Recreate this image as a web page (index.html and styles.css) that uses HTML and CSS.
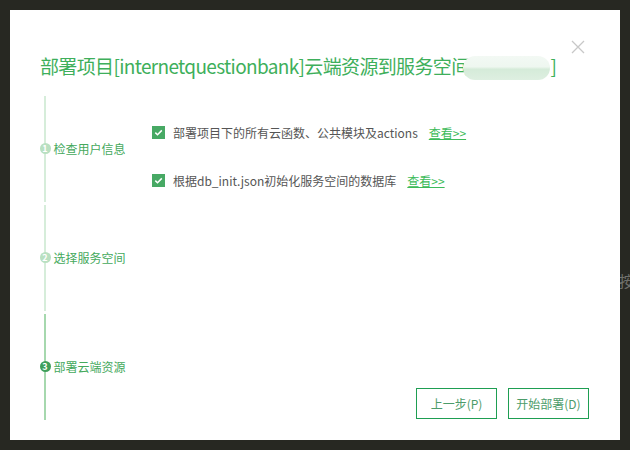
FILE: index.html
```html
<!DOCTYPE html>
<html lang="zh">
<head>
<meta charset="utf-8">
<link rel="stylesheet" href="styles.css">
</head>
<body>
<div class="behind">按</div>
<div class="dialog">
  <button class="close" aria-label="close">
    <svg width="14" height="14" viewBox="0 0 14 14"><path d="M1 1L13 13M13 1L1 13" stroke="#c8c8c8" stroke-width="1.3" fill="none"/></svg>
  </button>
  <h1 class="title">部署项目[internetquestionbank]云端资源到服务空间<span class="blur"></span>]</h1>
  <div class="body">
    <div class="steps">
      <div class="step"><span class="num">1</span><span class="label">检查用户信息</span></div>
      <div class="step"><span class="num">2</span><span class="label">选择服务空间</span></div>
      <div class="step active"><span class="num">3</span><span class="label">部署云端资源</span></div>
    </div>
    <div class="content">
      <div class="rows">
        <div class="row">
          <span class="check"><svg width="13" height="13" viewBox="0 0 13 13"><path d="M3.3 6.6L5.5 8.7L9.8 4.4" stroke="#fff" stroke-width="1.5" fill="none"/></svg></span>
          <span class="text">部署项目下的所有云函数、公共模块及actions</span>
          <a class="link" href="#">查看&gt;&gt;</a>
        </div>
        <div class="row">
          <span class="check"><svg width="13" height="13" viewBox="0 0 13 13"><path d="M3.3 6.6L5.5 8.7L9.8 4.4" stroke="#fff" stroke-width="1.5" fill="none"/></svg></span>
          <span class="text">根据db_init.json初始化服务空间的数据库</span>
          <a class="link" href="#">查看&gt;&gt;</a>
        </div>
      </div>
      <div class="footer">
        <button class="btn">上一步(P)</button>
        <button class="btn">开始部署(D)</button>
      </div>
    </div>
  </div>
</div>
</body>
</html>
```
FILE: styles.css
```css
html, body {
  margin: 0;
  padding: 0;
}
body {
  background: #272822;
  width: 630px;
  height: 450px;
  overflow: hidden;
  position: relative;
  font-family: "Noto Sans CJK SC", "Noto Sans", sans-serif;
}
.behind {
  position: absolute;
  left: 619px;
  top: 270px;
  font-size: 15px;
  color: #6f706b;
}
.dialog {
  position: relative;
  z-index: 1;
  margin: 10px;
  width: 610px;
  height: 430px;
  background: #fff;
  box-sizing: border-box;
  padding-right: 31px;
  display: flex;
  flex-direction: column;
}
.close {
  position: absolute;
  left: 561px;
  top: 30px;
  width: 14px;
  height: 14px;
  padding: 0;
  border: 0;
  background: none;
  display: block;
}
.close svg { display: block; }
.title {
  margin: 43px 0 0 30px;
  font-size: 19px;
  line-height: 26px;
  font-weight: normal;
  color: #3eaf5b;
  white-space: nowrap;
  letter-spacing: -0.65px;
}
.blur {
  display: inline-block;
  width: 87px;
  height: 24px;
  vertical-align: -6px;
  border-radius: 12px;
  background: linear-gradient(#f3f9f4 0%, #eef7f0 45%, #d5ebd9 55%, #deefe1 100%);
  margin-left: -7px;
  margin-right: 1px;
}
.body {
  margin-top: 16px;
  display: flex;
  flex: 1;
}
.steps {
  width: 108px;
  padding-left: 34px;
  display: flex;
  flex-direction: column;
  gap: 3px;
}
.step {
  height: 106px;
  box-sizing: border-box;
  padding-bottom: 2px;
  border-left: 2px solid #d6edda;
  display: flex;
  align-items: center;
}
.step.active {
  border-left-color: #a6d8ae;
}
.num {
  width: 11px;
  height: 11px;
  margin-left: -6.5px;
  border-radius: 50%;
  background: #b9e0c1;
  color: #fff;
  font-size: 9px;
  line-height: 11px;
  text-align: center;
  font-weight: bold;
  flex: none;
}
.step.active .num {
  background: #3f9f5b;
}
.label {
  margin-left: 3px;
  font-size: 12px;
  color: #45a95c;
  white-space: nowrap;
}
.content {
  flex: 1;
  display: flex;
  flex-direction: column;
}
.rows {
  padding-top: 26px;
  display: flex;
  flex-direction: column;
  gap: 28px;
}
.row {
  height: 20px;
  display: flex;
  align-items: center;
  white-space: nowrap;
}
.check {
  width: 13px;
  height: 13px;
  background: #47a964;
  flex: none;
}
.check svg { display: block; }
.text {
  margin-left: 8px;
  font-size: 12px;
  color: #555;
}
.link {
  margin-left: 11px;
  font-size: 12px;
  color: #3dbb5a;
  text-decoration: underline;
}
.footer {
  margin-top: auto;
  margin-bottom: 21px;
  display: flex;
  justify-content: flex-end;
  gap: 11px;
}
.btn {
  width: 81px;
  height: 31px;
  border: 1px solid #1e9e52;
  background: #fff;
  color: #4c9c6a;
  font-family: "Noto Sans CJK SC", "Noto Sans", sans-serif;
  font-size: 12px;
  padding: 0;
}
```
